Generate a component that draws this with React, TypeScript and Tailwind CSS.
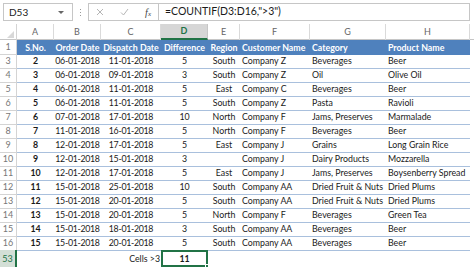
import React from 'react';

type Row = [string, string, string, string, string, string, string, string, string];

const rows: Row[] = [
  ['3', '2', '06-01-2018', '11-01-2018', '5', 'South', 'Company Z', 'Beverages', 'Beer'],
  ['4', '3', '06-01-2018', '09-01-2018', '3', 'South', 'Company Z', 'Oil', 'Olive Oil'],
  ['5', '4', '06-01-2018', '11-01-2018', '5', 'East', 'Company C', 'Beverages', 'Beer'],
  ['6', '5', '06-01-2018', '11-01-2018', '5', 'South', 'Company Z', 'Pasta', 'Ravioli'],
  ['7', '6', '07-01-2018', '17-01-2018', '10', 'North', 'Company F', 'Jams, Preserves', 'Marmalade'],
  ['8', '7', '11-01-2018', '16-01-2018', '5', 'North', 'Company F', 'Beverages', 'Beer'],
  ['9', '8', '12-01-2018', '17-01-2018', '5', 'East', 'Company J', 'Grains', 'Long Grain Rice'],
  ['10', '9', '12-01-2018', '15-01-2018', '3', '', 'Company J', 'Dairy Products', 'Mozzarella'],
  ['11', '10', '12-01-2018', '17-01-2018', '5', 'East', 'Company J', 'Jams, Preserves', 'Boysenberry Spread'],
  ['12', '11', '15-01-2018', '25-01-2018', '10', 'South', 'Company AA', 'Dried Fruit & Nuts', 'Dried Plums'],
  ['13', '12', '15-01-2018', '20-01-2018', '5', 'South', 'Company AA', 'Dried Fruit & Nuts', 'Dried Plums'],
  ['14', '13', '15-01-2018', '20-01-2018', '5', 'North', 'Company F', 'Beverages', 'Green Tea'],
  ['15', '14', '15-01-2018', '18-01-2018', '3', 'South', 'Company AA', 'Beverages', 'Beer'],
  ['16', '15', '15-01-2018', '20-01-2018', '5', 'South', 'Company AA', 'Beverages', 'Beer'],
];

const cols = ['A', 'B', 'C', 'D', 'E', 'F', 'G', 'H'];
const headers = ['S.No.', 'Order Date', 'Dispatch Date', 'Difference', 'Region', 'Customer Name', 'Category', 'Product Name'];

const gridCols = 'grid grid-cols-[17px_37px_47px_60px_47px_32px_70px_76px_84px_1fr]';

export default function App() {
  return (
    <div className="w-[474px] h-[268px] overflow-hidden bg-white text-[#1a1a1a] font-['Lato','Liberation_Sans',sans-serif]">
      {/* Formula bar */}
      <div className="h-[24px] flex items-center pl-[3px] pr-[4px] bg-white">
        <div className="w-[70px] h-[18px] border border-[#c6c6c6] flex items-center justify-between pl-[5px] pr-[8px] text-[10px]">
          <span>D53</span>
          <span className="w-0 h-0 border-l-[3px] border-r-[3px] border-t-[3px] border-l-transparent border-r-transparent border-t-[#666]" />
        </div>
        <div className="w-[15px] flex flex-col items-center gap-[2px]">
          <span className="w-[1px] h-[1px] bg-[#999]" />
          <span className="w-[1px] h-[1px] bg-[#999]" />
          <span className="w-[1px] h-[1px] bg-[#999]" />
        </div>
        <div className="flex-1 h-[18px] border border-[#c6c6c6] flex items-center">
          <div className="w-[70px] h-full flex items-center justify-between pl-[7px] pr-[7px] border-r border-[#c6c6c6]">
            <svg width="8" height="8" viewBox="0 0 8 8" className="text-[#b5b5b5]">
              <path d="M1 1L7 7M7 1L1 7" stroke="currentColor" strokeWidth="1" />
            </svg>
            <svg width="9" height="8" viewBox="0 0 9 8" className="text-[#b5b5b5]">
              <path d="M1 4.5L3.5 7L8 1" stroke="currentColor" strokeWidth="1" fill="none" />
            </svg>
            <span className="font-['Liberation_Serif',serif] italic text-[10px] text-[#444]">
              f<span className="text-[7px]">x</span>
            </span>
          </div>
          <div className="pl-[6px] text-[10.5px]">=COUNTIF(D3:D16,"&gt;3")</div>
        </div>
      </div>

      {/* Column headers */}
      <div className={`${gridCols} h-[16px] border-b border-[#c6c6c6] text-[9px] text-[#666]`}>
        <div className="relative border-r border-[#d4d4d4]">
          <span className="absolute right-[2px] bottom-[2px] w-0 h-0 border-l-[7px] border-l-transparent border-b-[7px] border-b-[#d8d8d8]" />
        </div>
        {cols.map((c) => (
          <div
            key={c}
            className={
              c === 'D'
                ? 'flex items-center justify-center bg-[#d6d6d6] border-r border-[#c6c6c6] border-b-2 border-b-[#217346] font-bold text-[#217346]'
                : 'flex items-center justify-center border-r border-[#dadada]'
            }
          >
            {c}
          </div>
        ))}
        <div />
      </div>

      {/* Row 1 - table header */}
      <div className={`${gridCols} h-[14px] text-[8.8px]`}>
        <div className="flex items-center justify-center border-r border-b border-[#d4d4d4] text-[9px] text-[#777]">1</div>
        {headers.map((h, i) => (
          <div
            key={h}
            className={`bg-[#4f81bd] text-white font-bold flex items-center whitespace-nowrap ${
              i < 5 ? 'justify-center' : 'pl-[2px]'
            }`}
          >
            {h}
          </div>
        ))}
        <div />
      </div>

      {/* Data rows */}
      {rows.map((r) => (
        <div key={r[0]} className={`${gridCols} h-[14px] text-[8.8px]`}>
          <div className="flex items-center justify-center border-r border-b border-[#d4d4d4] text-[9px] text-[#777]">{r[0]}</div>
          {r.slice(1).map((v, i) => (
            <div
              key={i}
              className={`flex items-center whitespace-nowrap border-b border-[#a9c0dd] ${
                i < 5 ? 'justify-center' : 'pl-[2px]'
              } ${i === 0 ? 'font-bold' : ''} ${i === 1 || i === 2 ? 'tracking-[-0.3px]' : ''}`}
            >
              {v}
            </div>
          ))}
          <div />
        </div>
      ))}

      {/* Row 53 */}
      <div className={`${gridCols} h-[15px] text-[8.8px]`}>
        <div className="flex items-center justify-center bg-[#d3dfd6] border-r-2 border-[#217346] text-[9px] text-[#217346]">53</div>
        <div />
        <div />
        <div className="flex items-center justify-end pr-[1px]">Cells &gt;3</div>
        <div className="relative flex items-center justify-center border-2 border-[#217346] font-bold">
          11
          <span className="absolute right-[-3px] bottom-[-3px] w-[4px] h-[4px] bg-[#217346] border border-white" />
        </div>
        <div />
        <div />
        <div />
        <div />
        <div />
      </div>
    </div>
  );
}
